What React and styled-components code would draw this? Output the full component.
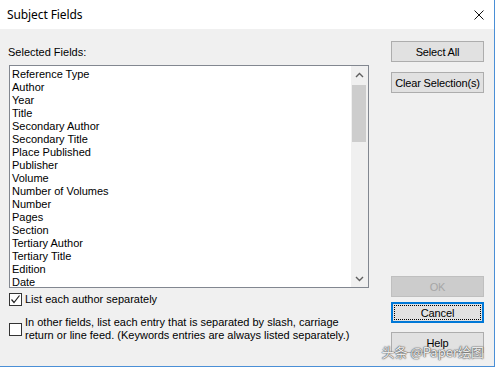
import React from "react";
import styled, { createGlobalStyle } from "styled-components";

const Global = createGlobalStyle`
  html, body { margin: 0; padding: 0; background: #ffffff; }
  #root { width: 496px; height: 368px; overflow: hidden; }
`;

const Window = styled.div`
  position: relative;
  width: 494px;
  height: 366px;
  border-right: 1px solid #4a8fd6;
  border-bottom: 1px solid #4a8fd6;
  background: #f0f0f0;
  display: flex;
  flex-direction: column;
  font-family: "Liberation Sans", Arial, sans-serif;
  font-size: 11px;
  color: #000;
`;

const TitleBar = styled.div`
  height: 29px;
  background: #ffffff;
  display: flex;
  align-items: center;
  justify-content: space-between;
  padding: 0 10px 0 7px;
  flex-shrink: 0;
`;

const TitleText = styled.span`
  font-family: "Noto Sans", "Segoe UI", sans-serif;
  font-size: 12px;
  color: #000;
  letter-spacing: -0.1px;
`;

const Body = styled.div`
  flex: 1;
  display: flex;
  padding: 12px 0 0 8px;
`;

const LeftCol = styled.div`
  width: 361px;
  display: flex;
  flex-direction: column;
`;

const Label = styled.div`
  height: 13px;
  line-height: 13px;
  margin-top: 5px;
`;

const ListBox = styled.div`
  margin-top: 6px;
  margin-left: 1px;
  width: 358px;
  height: 221px;
  border: 1px solid #828790;
  background: #fff;
  display: flex;
`;

const Items = styled.div`
  flex: 1;
  padding: 2px 0 0 2px;
  overflow: hidden;
`;

const Item = styled.div`
  height: 13px;
  line-height: 13px;
  white-space: nowrap;
`;

const ScrollBar = styled.div`
  width: 17px;
  background: #f0f0f0;
  display: flex;
  flex-direction: column;
`;

const Arrow = styled.div`
  height: 17px;
  display: flex;
  align-items: center;
  justify-content: center;
`;

const Track = styled.div`
  flex: 1;
  padding: 2px 2px 0 1px;
`;

const Thumb = styled.div`
  height: 57px;
  background: #cdcdcd;
`;

const CheckRow = styled.div`
  display: flex;
  align-items: center;
  gap: 3px;
  margin-left: 1px;
  margin-top: ${(p) => p.$mt}px;
`;

const Box = styled.div`
  width: 11px;
  height: 11px;
  border: 1px solid #333333;
  background: #fff;
  display: flex;
  align-items: center;
  justify-content: center;
  flex-shrink: 0;
`;

const CheckText = styled.div`
  line-height: 13px;
`;

const RightCol = styled.div`
  margin-left: 22px;
  width: 93px;
  display: flex;
  flex-direction: column;
`;

const Button = styled.div`
  box-sizing: border-box;
  height: 21px;
  margin-top: ${(p) => p.$mt || 0}px;
  background: ${(p) => (p.$disabled ? "#cccccc" : "#e1e1e1")};
  border: ${(p) =>
    p.$default ? "2px solid #0078d7" : p.$disabled ? "1px solid #bfbfbf" : "1px solid #adadad"};
  color: ${(p) => (p.$disabled ? "#a6a6a6" : "#000")};
  display: flex;
  align-items: center;
  justify-content: center;
  letter-spacing: -0.15px;
  white-space: nowrap;
  position: relative;
`;

const Focus = styled.div`
  position: absolute;
  inset: 1px;
  border: 1px dotted #000;
`;

const Watermark = styled.div`
  position: absolute;
  right: 10px;
  bottom: 5px;
  font-family: "Noto Sans CJK SC", sans-serif;
  font-size: 13px;
  color: rgba(255, 255, 255, 0.9);
  text-shadow: 0 0 1px #555, 0 0 1px #555, 0 0 2px #777;
  white-space: nowrap;
`;

const fields = [
  "Reference Type",
  "Author",
  "Year",
  "Title",
  "Secondary Author",
  "Secondary Title",
  "Place Published",
  "Publisher",
  "Volume",
  "Number of Volumes",
  "Number",
  "Pages",
  "Section",
  "Tertiary Author",
  "Tertiary Title",
  "Edition",
  "Date",
];

const Chevron = ({ up }) => (
  <svg width="9" height="6" viewBox="0 0 9 6">
    <path
      d={up ? "M1 5 L4.5 1.5 L8 5" : "M1 1 L4.5 4.5 L8 1"}
      fill="none"
      stroke="#606060"
      strokeWidth="1.4"
    />
  </svg>
);

export default function App() {
  return (
    <>
      <Global />
      <Window>
        <TitleBar>
          <TitleText>Subject Fields</TitleText>
          <svg width="10" height="10" viewBox="0 0 10 10">
            <path d="M0.5 0.5 L9.5 9.5 M9.5 0.5 L0.5 9.5" stroke="#111" strokeWidth="1" />
          </svg>
        </TitleBar>
        <Body>
          <LeftCol>
            <Label>Selected Fields:</Label>
            <ListBox>
              <Items>
                {fields.map((f) => (
                  <Item key={f}>{f}</Item>
                ))}
              </Items>
              <ScrollBar>
                <Arrow>
                  <Chevron up />
                </Arrow>
                <Track>
                  <Thumb />
                </Track>
                <Arrow>
                  <Chevron />
                </Arrow>
              </ScrollBar>
            </ListBox>
            <CheckRow $mt={5}>
              <Box>
                <svg width="11" height="11" viewBox="0 0 11 11">
                  <path d="M1.5 5.5 L4 8.5 L9.5 1.5" fill="none" stroke="#222" strokeWidth="1.2" />
                </svg>
              </Box>
              <CheckText>List each author separately</CheckText>
            </CheckRow>
            <CheckRow $mt={10}>
              <Box />
              <CheckText>
                In other fields, list each entry that is separated by slash, carriage
                <br />
                return or line feed. (Keywords entries are always listed separately.)
              </CheckText>
            </CheckRow>
          </LeftCol>
          <RightCol>
            <Button>Select All</Button>
            <Button $mt={10}>Clear Selection(s)</Button>
            <Button $mt={183} $disabled>
              OK
            </Button>
            <Button $mt={5} $default>
              <Focus />
              Cancel
            </Button>
            <Button $mt={9}>Help</Button>
          </RightCol>
        </Body>
        <Watermark>头条 @Paper绘图</Watermark>
      </Window>
    </>
  );
}
